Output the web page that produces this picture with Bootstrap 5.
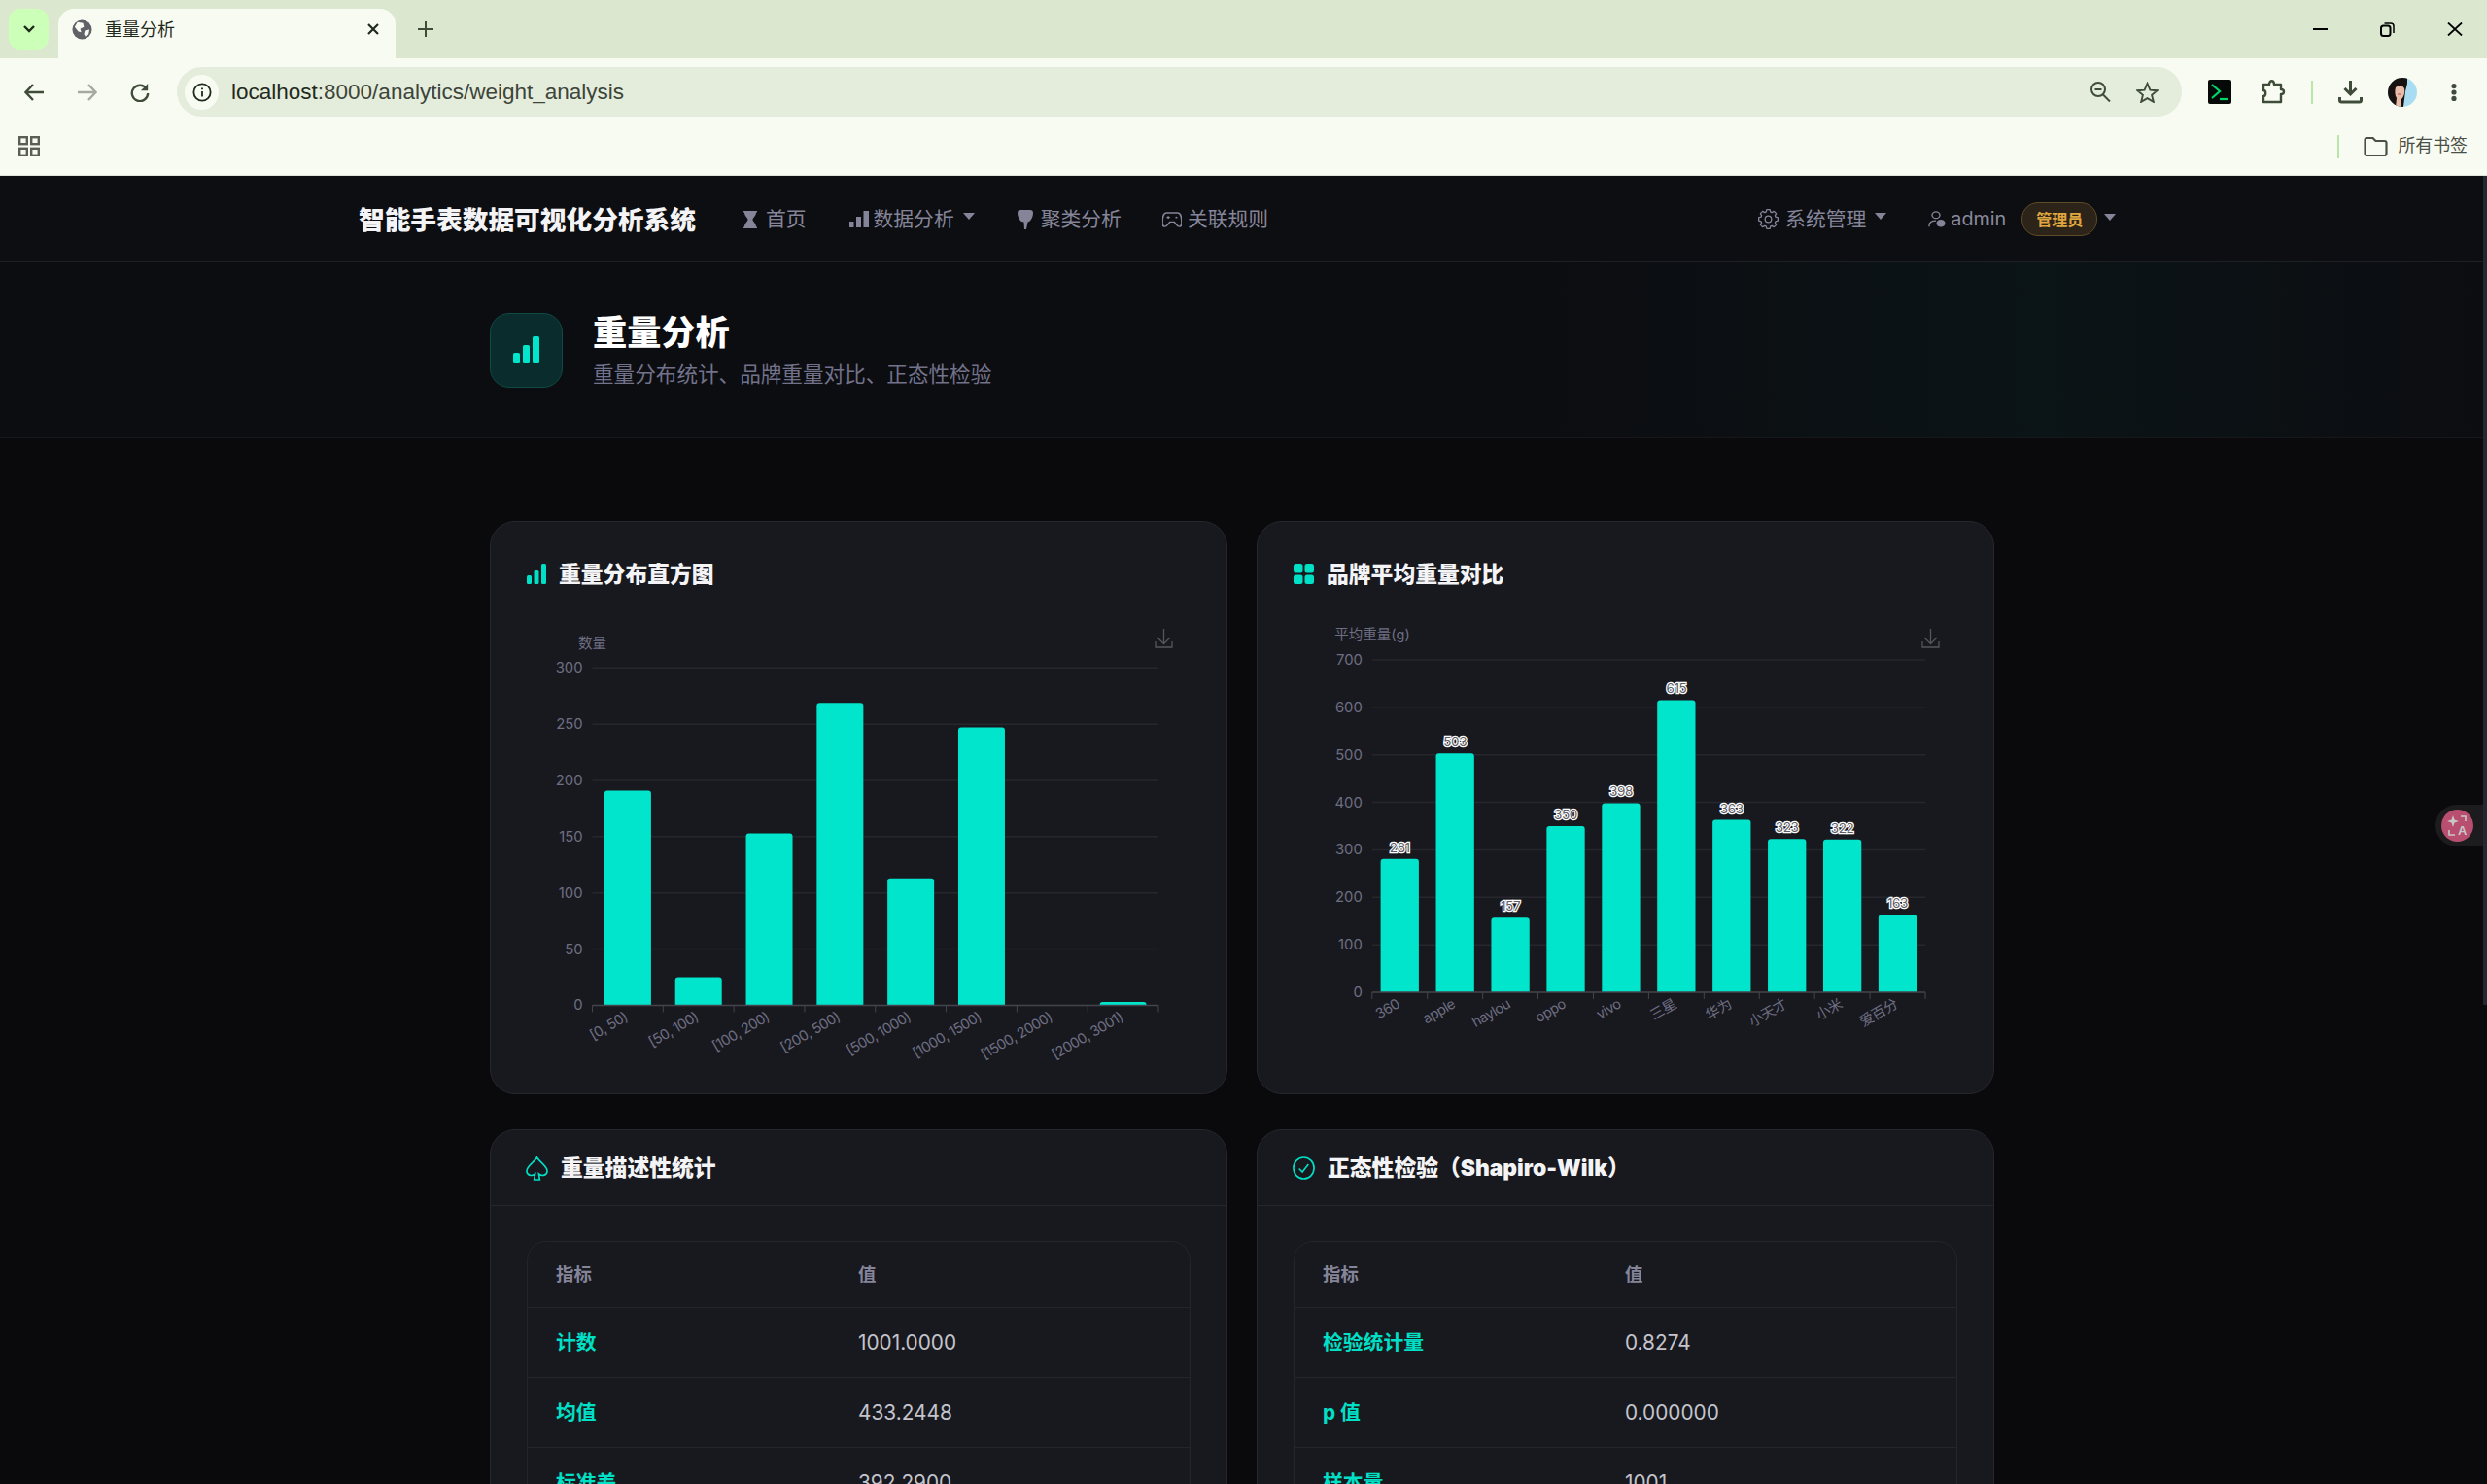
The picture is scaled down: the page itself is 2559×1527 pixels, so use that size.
<!DOCTYPE html>
<html lang="zh-CN">
<head>
<meta charset="UTF-8" />
<title>重量分析</title>
<link href="https://cdn.jsdelivr.net/npm/bootstrap@5.3.0/dist/css/bootstrap.min.css" rel="stylesheet" />
<style>
  html, body { height: 1527px; overflow: hidden; }
  body { background: #0a0a0d; color: #e6e6ea; font-family: "Inter", "Noto Sans CJK SC", sans-serif; font-size: 20.8px; }

  /* 浏览器外壳 */
  .chrome { height: 181px; background: #f8fbf2; border-bottom: 1px solid #dfe3d6; font-family: "Liberation Sans", "Noto Sans CJK SC", sans-serif; color: #1f2a1c; }
  .tab-strip { height: 60px; background: #dbe8cf; padding: 9px 25px 0 9px; }
  .tab-menu { width: 41px; height: 42px; border-radius: 12px; background: #ccffb8; margin-right: 10px; }
  .tab-live { width: 347px; height: 51px; background: #f8fbf2; border-radius: 16px 16px 0 0; padding: 0 17px 7px 14px; font-size: 18px; }
  .tab-fav { margin-right: 13px; margin-bottom: 2px; }
  .tab-close { margin-bottom: 2px; }
  .tab-plus { margin-left: 23px; height: 42px; }
  .win-btns { gap: 54px; height: 42px; }
  .tool-row { height: 60px; padding: 9px 0 0 25px; }
  .nav-arrows { gap: 34.5px; width: 157px; height: 51px; }
  .omni { height: 51px; width: 2063px; border-radius: 26px; background: #e4eddb; padding: 0 24px 0 8px; font-size: 22.5px; color: #3d443a; }
  .omni-info { width: 35px; height: 36px; border-radius: 50%; background: #f8fbf2; margin-right: 13px; }
  .omni-url b { font-weight: 400; color: #1f2a1c; }
  .omni-zoom { margin-right: 26px; }
  .tool-icons { gap: 26px; height: 51px; margin-left: 27px; }
  .tool-puzzle { margin-left: 5px; }
  .tool-dots { margin-left: 9px; }
  .tool-sep { width: 2px; height: 24px; background: #b9e6a6; }
  .bm-row { height: 59px; padding: 2px 20px 0 19px; font-size: 17.9px; color: #4a4f47; }
  .bm-sep { margin-right: 25px; }
  .bm-folder { margin-right: 10px; }

  /* 顶部导航 */
  .top-bar { height: 89px; background: #0d0e11; border-bottom: 1px solid #1f2025; padding: 1.5px 0 0 369px; }
  .brand-txt { font-size: 26.7px; font-weight: 900; color: #f4f4f6; margin-right: 48px; }
  .top-link { font-size: 20.8px; color: #85859a; display: flex; align-items: center; gap: 8px; text-decoration: none; }
  .caret-dn { width: 0; height: 0; border: 6px solid transparent; border-top: 7px solid #85859a; border-bottom: 0; }
  .top-link .caret-dn { margin-left: 2px; margin-bottom: 6px; }
  .link-data { margin-left: 44px; gap: 5px; }
  .top-link.link-data .caret-dn { margin-left: 4px; }
  .link-cluster { margin-left: 44px; }
  .link-rule { margin-left: 42px; gap: 6px; }
  .link-sys { margin-left: 504px; gap: 7px; }
  .link-user { margin-left: 43px; gap: 5px; font-size: 19.8px; color: #8a8a9e; }
  .role-pill { font-size: 16px; font-weight: 700; color: #e0a63f; background: #2c2419; border: 1px solid #5e4a27; border-radius: 17px; width: 78px; height: 35px; margin-left: 16px; }
  .role-caret { margin-left: 7px; margin-bottom: 4px; }

  /* 页面标题 */
  .page-head { height: 181px; background: linear-gradient(90deg, #0c0d11 0 62%, #0b1416 82%, #0c0d11 100%); border-bottom: 1px solid #16171b; padding-left: 504px; gap: 31px; }
  .head-ico { width: 75px; height: 77px; border-radius: 20px; background: #0b2c2c; border: 1px solid #0f4a44; }
  .head-title { font-size: 35.2px; font-weight: 900; color: #fff; line-height: 42px; margin: 0 0 7px 0; }
  .head-sub { font-size: 21.6px; color: #72728a; line-height: 30px; margin: 0; }

  /* 内容 */
  .main-wrap { width: 1548px; margin-left: 504px; padding-top: 85px; }
  .grid-two { display: grid; grid-template-columns: 759px 759px; column-gap: 30px; row-gap: 36px; }
  .panel { background: #18191f; border: 1px solid #26272d; border-radius: 26px; overflow: hidden; }
  .panel-chart { height: 590px; position: relative; }
  .panel-title { font-size: 22.8px; font-weight: 900; color: #f4f4f6; gap: 13px; margin: 0; }
  .chart-head { padding: 40px 37px 0; }
  .panel-head { height: 78px; padding: 1px 36px 0; border-bottom: 1px solid #26272d; }
  .panel-body { padding: 36px 37px; }
  .chart-svg { position: absolute; left: -1px; top: -1px; }
  .stat-box { border: 1px solid #24252b; border-radius: 20px; overflow: hidden; }
  .stat-row { height: 72px; border-top: 1px solid #24252b; color: #c4c4cc; padding-left: 29px; }
  .stat-row:first-child { height: 67px; border-top: 0; color: #85859a; font-size: 18.4px; font-weight: 600; }
  .stat-key { width: 311px; font-weight: 700; color: #00e0c6; }
  .stat-row:first-child .stat-key { color: #85859a; font-weight: 600; }

  /* 悬浮翻译按钮和滚动条 */
  .float-pill { position: absolute; left: 2506px; top: 828px; width: 49px; height: 43px; background: #1c1c1f; border-radius: 22px 0 0 22px; }
  .float-dot { width: 33px; height: 33px; border-radius: 50%; background: #b84e70; margin-left: 6px; }
  .fake-scroll { position: absolute; left: 2555px; top: 181px; width: 4px; height: 853px; background: #262630; }
</style>
</head>
<body>

<div class="chrome">
  <div class="tab-strip d-flex align-items-start">
    <div class="tab-menu d-flex align-items-center justify-content-center">
      <svg width="14" height="10" viewBox="0 0 14 10"><path d="M2 2l5 5 5-5" fill="none" stroke="#1f2a1c" stroke-width="2.400"/></svg>
    </div>
    <div class="tab-live d-flex align-items-center">
      <svg width="21" height="21" viewBox="0 0 22 22" class="tab-fav"><circle cx="11" cy="11" r="10.500" fill="#5f6368"/><path d="M6 3l6 1 1 4-4 2 1 4-3-1-4-5zM14 12l5-1-1 5-3 3-2-3z" fill="#f8fbf2"/></svg>
      <span class="flex-grow-1">重量分析</span>
      <svg width="12" height="12" viewBox="0 0 12 12" class="tab-close"><path d="M1 1l10 10M11 1L1 11" stroke="#1f2a1c" stroke-width="2.200"/></svg>
    </div>
    <div class="tab-plus d-flex align-items-center">
      <svg width="16" height="16" viewBox="0 0 16 16"><path d="M8 0v16M0 8h16" stroke="#3f4c3a" stroke-width="2"/></svg>
    </div>
    <div class="win-btns d-flex align-items-center ms-auto">
      <svg width="15" height="14" viewBox="0 0 15 14"><path d="M0 7h15" stroke="#000" stroke-width="2"/></svg>
      <svg width="15" height="15" viewBox="0 0 15 15"><rect x="1" y="3.500" width="9.500" height="10.500" rx="2.500" fill="none" stroke="#000" stroke-width="2"/><path d="M4.500 1h6.500a3 3 0 0 1 3 3v7" fill="none" stroke="#000" stroke-width="1.500"/></svg>
      <svg width="16" height="14" viewBox="0 0 16 14"><path d="M1 .5l14 13M15 .5L1 13.500" stroke="#000" stroke-width="1.800"/></svg>
    </div>
  </div>

  <div class="tool-row d-flex">
    <div class="nav-arrows d-flex align-items-center">
      <svg width="20" height="18" viewBox="0 0 20 18"><path d="M9 1L1.500 9 9 17M1.500 9H20" fill="none" stroke="#3f4c3a" stroke-width="2.400"/></svg>
      <svg width="20" height="18" viewBox="0 0 20 18"><path d="M11 1l7.500 8L11 17M18.500 9H0" fill="none" stroke="#a5aaa0" stroke-width="2.400"/></svg>
      <svg width="20" height="20" viewBox="0 0 22 22"><path d="M18.500 7A9 9 0 1 0 20 12" fill="none" stroke="#3f4c3a" stroke-width="2.600"/><path d="M20 1v8h-8z" fill="#3f4c3a"/></svg>
    </div>
    <div class="omni d-flex align-items-center">
      <div class="omni-info d-flex align-items-center justify-content-center">
        <svg width="20" height="20" viewBox="0 0 22 22"><circle cx="11" cy="11" r="9.500" fill="none" stroke="#1f2a1c" stroke-width="2"/><path d="M11 10v6M11 6v2" stroke="#1f2a1c" stroke-width="2"/></svg>
      </div>
      <span class="omni-url flex-grow-1"><b>localhost</b>:8000/analytics/weight_analysis</span>
      <svg width="22" height="21" viewBox="0 0 22 21" class="omni-zoom"><circle cx="9" cy="8" r="7" fill="none" stroke="#3f4c3a" stroke-width="2"/><path d="M5.500 8h7M14 13.500l7 7" stroke="#3f4c3a" stroke-width="2"/></svg>
      <svg width="23" height="22" viewBox="0 0 24 23"><path d="M12 2l3 7 7.500 .6-5.700 4.900 1.800 7.300L12 18 5.400 21.800l1.800-7.300-5.700-4.900L9 9z" fill="none" stroke="#3f4c3a" stroke-width="2"/></svg>
    </div>
    <div class="tool-icons d-flex align-items-center">
      <svg width="24" height="25" viewBox="0 0 24 25"><rect width="24" height="25" rx="2" fill="#050a08"/><path d="M4 5l8 7-8 7" fill="none" stroke="#00d96a" stroke-width="2.200"/><path d="M12 20h8" stroke="#00d96a" stroke-width="2.200"/></svg>
      <svg width="25" height="25" viewBox="0 0 25 25" class="tool-puzzle"><path d="M2 5h6c0-5 5-5 5 0h7v5c4 0 4 5 0 5v8H2v-6c3 0 3-6 0-6z" fill="none" stroke="#3f4c3a" stroke-width="2.400" stroke-linejoin="round"/></svg>
      <div class="tool-sep"></div>
      <svg width="25" height="24" viewBox="0 0 25 24"><path d="M12.500 0v13M6.500 8l6 6 6-6" fill="none" stroke="#3f4c3a" stroke-width="3"/><path d="M1.500 17v3a2 2 0 0 0 2 2h18a2 2 0 0 0 2-2v-3" fill="none" stroke="#3f4c3a" stroke-width="3"/></svg>
      <svg width="30" height="30" viewBox="0 0 30 30">
        <clipPath id="avClip"><circle cx="15" cy="15" r="15"/></clipPath>
        <g clip-path="url(#avClip)">
          <rect width="30" height="30" fill="#a8dcf2"/>
          <path d="M0 0h20v6l-2 8-2 16H0z" fill="#17110f"/>
          <path d="M8 10c3-3 8-2 9 1 1 5-1 9-3 11l-1 8H8l1-9c-2-3-2-8-1-11z" fill="#e9bba9"/>
          <path d="M10 17h4" stroke="#b5485a" stroke-width="1.200"/>
        </g>
      </svg>
      <svg width="6" height="18" viewBox="0 0 6 18" class="tool-dots"><circle cx="3" cy="2.600" r="2.600" fill="#3f4c3a"/><circle cx="3" cy="9" r="2.600" fill="#3f4c3a"/><circle cx="3" cy="15.400" r="2.600" fill="#3f4c3a"/></svg>
    </div>
  </div>

  <div class="bm-row d-flex align-items-center">
    <svg width="22" height="21" viewBox="0 0 22 21"><g fill="none" stroke="#5a5f56" stroke-width="2.400"><rect x="1.200" y="1.200" width="7.600" height="7"/><rect x="13.200" y="1.200" width="7.600" height="7"/><rect x="1.200" y="12.800" width="7.600" height="7"/><rect x="13.200" y="12.800" width="7.600" height="7"/></g></svg>
    <div class="tool-sep bm-sep ms-auto"></div>
    <svg width="25" height="20" viewBox="0 0 25 20" class="bm-folder"><path d="M1.500 3a2 2 0 0 1 2-2h6l3 3h9a2 2 0 0 1 2 2v11a2 2 0 0 1-2 2h-18a2 2 0 0 1-2-2z" fill="none" stroke="#4a5046" stroke-width="2.200"/></svg>
    <span>所有书签</span>
  </div>
</div>

<nav class="top-bar d-flex align-items-center">
  <span class="brand-txt">智能手表数据可视化分析系统</span>
  <a class="top-link" href="#">
    <svg width="16" height="18" viewBox="0 0 16 18"><path d="M1 0h14v1.500h-1c0 4-3.500 5.500-3.500 7.500s3.500 3.500 3.500 7.500h1V18H1v-1.500h1c0-4 3.500-5.500 3.500-7.500S2 5.500 2 1.500H1z" fill="#85859a"/></svg>
    首页</a>
  <a class="top-link link-data" href="#">
    <svg width="20" height="17" viewBox="0 0 20 17"><path d="M0 11h4.500v6H0zM7 6h5v11H7zM14.500 0H20v17h-5.500z" fill="#85859a"/></svg>
    数据分析 <span class="caret-dn"></span></a>
  <a class="top-link link-cluster" href="#">
    <svg width="16" height="20" viewBox="0 0 16 25" preserveAspectRatio="none"><path d="M3 0h10c2 0 3 1 3 4 0 5-2 9-4 11l-1.500 .5L9 25H7l-.5-9.500L4 15C2 13 0 9 0 4c0-3 1-4 3-4z" fill="#85859a"/></svg>
    聚类分析</a>
  <a class="top-link link-rule" href="#">
    <svg width="20" height="16" viewBox="1 1 18 17" preserveAspectRatio="none"><path d="M5 2h10c3 0 4 6 4 11 0 5-3 5-5 2l-2-3H8l-2 3c-2 3-5 3-5-2C1 8 2 2 5 2z" fill="none" stroke="#85859a" stroke-width="1.500"/><path d="M5 7h3M6.500 5.500v3" stroke="#85859a" stroke-width="1.300"/><circle cx="14" cy="7" r="1" fill="#85859a"/></svg>
    关联规则</a>
  <a class="top-link link-sys" href="#">
    <svg width="21" height="21" viewBox="0 0 21 21"><path id="gearPath" fill="none" stroke="#85859a" stroke-width="1.300" stroke-linejoin="round"/><circle cx="10.500" cy="10.500" r="3.300" fill="none" stroke="#85859a" stroke-width="1.300"/></svg>
    系统管理 <span class="caret-dn"></span></a>
  <a class="top-link link-user" href="#">
    <svg width="18" height="17" viewBox="0 0 18 20" preserveAspectRatio="none"><circle cx="8" cy="5" r="4" fill="none" stroke="#85859a" stroke-width="1.400"/><path d="M1 19v-1c0-4 3-6 7-6" fill="none" stroke="#85859a" stroke-width="1.400"/><circle cx="13" cy="15" r="4.500" fill="#85859a"/></svg>
    admin</a>
  <span class="role-pill d-flex align-items-center justify-content-center">管理员</span>
  <span class="caret-dn role-caret"></span>
</nav>

<header class="page-head d-flex align-items-center">
  <div class="head-ico d-flex align-items-center justify-content-center">
    <svg width="28" height="28" viewBox="0 0 28 28"><rect x="0" y="17" width="7" height="11" rx="1.500" fill="#00e5cc"/><rect x="10" y="9" width="7" height="19" rx="1.500" fill="#00e5cc"/><rect x="20" y="0" width="7" height="28" rx="1.500" fill="#00e5cc"/></svg>
  </div>
  <div>
    <h1 class="head-title">重量分析</h1>
    <p class="head-sub">重量分布统计、品牌重量对比、正态性检验</p>
  </div>
</header>

<main class="main-wrap">
  <div class="grid-two">

    <section class="panel panel-chart">
      <svg class="chart-svg" id="chartHist" width="759" height="590"></svg>
      <div class="chart-head">
        <h2 class="panel-title d-flex align-items-center">
          <svg width="20" height="21" viewBox="0 0 20 21"><rect y="12" width="5" height="9" rx="1.500" fill="#00e0c6"/><rect x="7.500" y="7" width="5" height="14" rx="1.500" fill="#00e0c6"/><rect x="15" width="5" height="21" rx="1.500" fill="#00e0c6"/></svg>
          重量分布直方图
        </h2>
      </div>
    </section>

    <section class="panel panel-chart">
      <svg class="chart-svg" id="chartBrand" width="759" height="590"></svg>
      <div class="chart-head">
        <h2 class="panel-title d-flex align-items-center">
          <svg width="21" height="21" viewBox="0 0 21 21"><rect width="9.500" height="9.500" rx="2.500" fill="#00e0c6"/><rect x="11.500" width="9.500" height="9.500" rx="2.500" fill="#00e0c6"/><rect y="11.500" width="9.500" height="9.500" rx="2.500" fill="#00e0c6"/><rect x="11.500" y="11.500" width="9.500" height="9.500" rx="2.500" fill="#00e0c6"/></svg>
          品牌平均重量对比
        </h2>
      </div>
    </section>

    <section class="panel">
      <div class="panel-head d-flex align-items-center">
        <h2 class="panel-title d-flex align-items-center">
          <svg width="23" height="25" viewBox="0 0 24 25" preserveAspectRatio="none"><path d="M12 1C9 6 1 10 1 15c0 4 5 6 9 3l-1 6h6l-1-6c4 3 9 1 9-3 0-5-8-9-11-14z" fill="none" stroke="#00e0c6" stroke-width="1.700"/></svg>
          重量描述性统计
        </h2>
      </div>
      <div class="panel-body">
        <div class="stat-box">
          <div class="stat-row d-flex align-items-center"><div class="stat-key">指标</div><div>值</div></div>
          <div class="stat-row d-flex align-items-center"><div class="stat-key">计数</div><div>1001.0000</div></div>
          <div class="stat-row d-flex align-items-center"><div class="stat-key">均值</div><div>433.2448</div></div>
          <div class="stat-row d-flex align-items-center"><div class="stat-key">标准差</div><div>392.2900</div></div>
        </div>
      </div>
    </section>

    <section class="panel">
      <div class="panel-head d-flex align-items-center">
        <h2 class="panel-title d-flex align-items-center">
          <svg width="23" height="24" viewBox="0 0 24 24" preserveAspectRatio="none"><circle cx="12" cy="12" r="11" fill="none" stroke="#00e0c6" stroke-width="1.700"/><path d="M7 12.500l3.500 3.500 6.500-8" fill="none" stroke="#00e0c6" stroke-width="1.700"/></svg>
          正态性检验（Shapiro-Wilk）
        </h2>
      </div>
      <div class="panel-body">
        <div class="stat-box">
          <div class="stat-row d-flex align-items-center"><div class="stat-key">指标</div><div>值</div></div>
          <div class="stat-row d-flex align-items-center"><div class="stat-key">检验统计量</div><div>0.8274</div></div>
          <div class="stat-row d-flex align-items-center"><div class="stat-key">p 值</div><div>0.000000</div></div>
          <div class="stat-row d-flex align-items-center"><div class="stat-key">样本量</div><div>1001</div></div>
        </div>
      </div>
    </section>

  </div>
</main>

<div class="fake-scroll"></div>
<div class="float-pill d-flex align-items-center">
  <div class="float-dot d-flex align-items-center justify-content-center">
    <svg width="23" height="23" viewBox="0 0 23 23"><path d="M7 1l1.500 4.500L13 7 8.500 8.500 7 13 5.500 8.500 1 7l4.500-1.500z" fill="#c8c8c8"/><path d="M15 2h5v5M3 16v5h6" fill="none" stroke="#c8c8c8" stroke-width="1.600"/><text x="12" y="21" font-size="13" font-weight="700" fill="#c8c8c8" font-family="Liberation Sans">A</text></svg>
  </div>
</div>

<script>
  // 齿轮图标的外轮廓
  function gearOutline(cx, cy, rIn, rOut, teeth) {
    const pts = [];
    for (let i = 0; i < teeth; i++) {
      const a = i / teeth * Math.PI * 2;
      [[-.3, rIn], [-.16, rOut], [.16, rOut], [.3, rIn]].forEach(([d, r]) => {
        pts.push((cx + r * Math.cos(a + d)).toFixed(2) + ' ' + (cy + r * Math.sin(a + d)).toFixed(2));
      });
    }
    return 'M' + pts.join('L') + 'z';
  }
  document.getElementById('gearPath').setAttribute('d', gearOutline(10.5, 10.5, 7.8, 10, 8));

  // 柱状图，数据画成 svg
  const chartFont = '"Inter", "Noto Sans CJK SC", sans-serif';

  function drawChart(id, cfg) {
    let out = '';
    const plotH = cfg.y0 - cfg.yTop;
    const stepX = (cfg.x1 - cfg.x0) / cfg.labels.length;

    // 网格线和 y 轴刻度
    for (let i = 0; i <= cfg.ticks; i++) {
      const v = cfg.max / cfg.ticks * i;
      const y = cfg.y0 - plotH * i / cfg.ticks;
      if (i > 0) out += `<line x1="${cfg.x0}" x2="${cfg.x1}" y1="${y}" y2="${y}" stroke="#26272d" stroke-width="1.500"/>`;
      out += `<text x="${cfg.x0 - 10}" y="${y + 5}" text-anchor="end" font-size="14.800" fill="#6e6e82">${v}</text>`;
    }

    // 柱子
    cfg.values.forEach((v, i) => {
      const h = plotH * v / cfg.max;
      const cx = cfg.x0 + stepX * (i + .5);
      if (v > 0) out += `<path d="M${cx - cfg.barW / 2} ${cfg.y0}v${-h + 3}q0 -3 3 -3h${cfg.barW - 6}q3 0 3 3v${h - 3}z" fill="#00e5cc"/>`;
      if (cfg.showValue) {
        out += `<text x="${cx}" y="${cfg.y0 - h - 7}" text-anchor="middle" font-size="13.500" letter-spacing="-.4" fill="#5c5c64" stroke="#fff" stroke-width="2.400" paint-order="stroke">${v}</text>`;
      }
    });

    // x 轴
    out += `<line x1="${cfg.x0}" x2="${cfg.x1}" y1="${cfg.y0}" y2="${cfg.y0}" stroke="#44454c" stroke-width="1.500"/>`;
    cfg.labels.forEach((t, i) => {
      const tx = cfg.x0 + stepX * i;
      out += `<line x1="${tx}" x2="${tx}" y1="${cfg.y0}" y2="${cfg.y0 + 7}" stroke="#44454c"/>`;
      const cx = tx + stepX / 2;
      out += `<text transform="translate(${cx + 1} ${cfg.y0 + 15}) rotate(-30)" text-anchor="end" font-size="14.500" letter-spacing="-.5" fill="#6e6e82">${t}</text>`;
    });
    out += `<line x1="${cfg.x1}" x2="${cfg.x1}" y1="${cfg.y0}" y2="${cfg.y0 + 7}" stroke="#44454c"/>`;

    // 轴名称
    out += `<text x="${cfg.nameX}" y="${cfg.nameY}" text-anchor="middle" font-size="14.500" fill="#6e6e82">${cfg.name}</text>`;

    // 下载按钮
    out += `<path transform="translate(${cfg.dlX} 111)" d="M8.500 0v15M2 9l6.500 6.500L15 9M0 13v6h17v-6" fill="none" stroke="#55565c" stroke-width="1.300"/>`;

    const el = document.getElementById(id);
    el.setAttribute('font-family', chartFont);
    el.innerHTML = out;
  }

  // 坐标都减去卡片左上角 (504, 536) 和 (1293, 536)
  drawChart('chartHist', {
    x0: 105.5, x1: 688, y0: 498.4, yTop: 151.3, max: 300, ticks: 6, barW: 48,
    labels: ['[0, 50)', '[50, 100)', '[100, 200)', '[200, 500)', '[500, 1000)', '[1000, 1500)', '[1500, 2000)', '[2000, 3001)'],
    values: [191, 25, 153, 269, 113, 247, 0, 3],
    name: '数量', nameX: 105.5, nameY: 131, dlX: 685, showValue: false
  });

  drawChart('chartBrand', {
    x0: 118.8, x1: 688, y0: 485, yTop: 142.9, max: 700, ticks: 7, barW: 39.3,
    labels: ['360', 'apple', 'haylou', 'oppo', 'vivo', '三星', '华为', '小天才', '小米', '爱百分'],
    values: [281, 503, 157, 350, 398, 615, 363, 323, 322, 163],
    name: '平均重量(g)', nameX: 119, nameY: 122, dlX: 685, showValue: true
  });
</script>

</body>
</html>
